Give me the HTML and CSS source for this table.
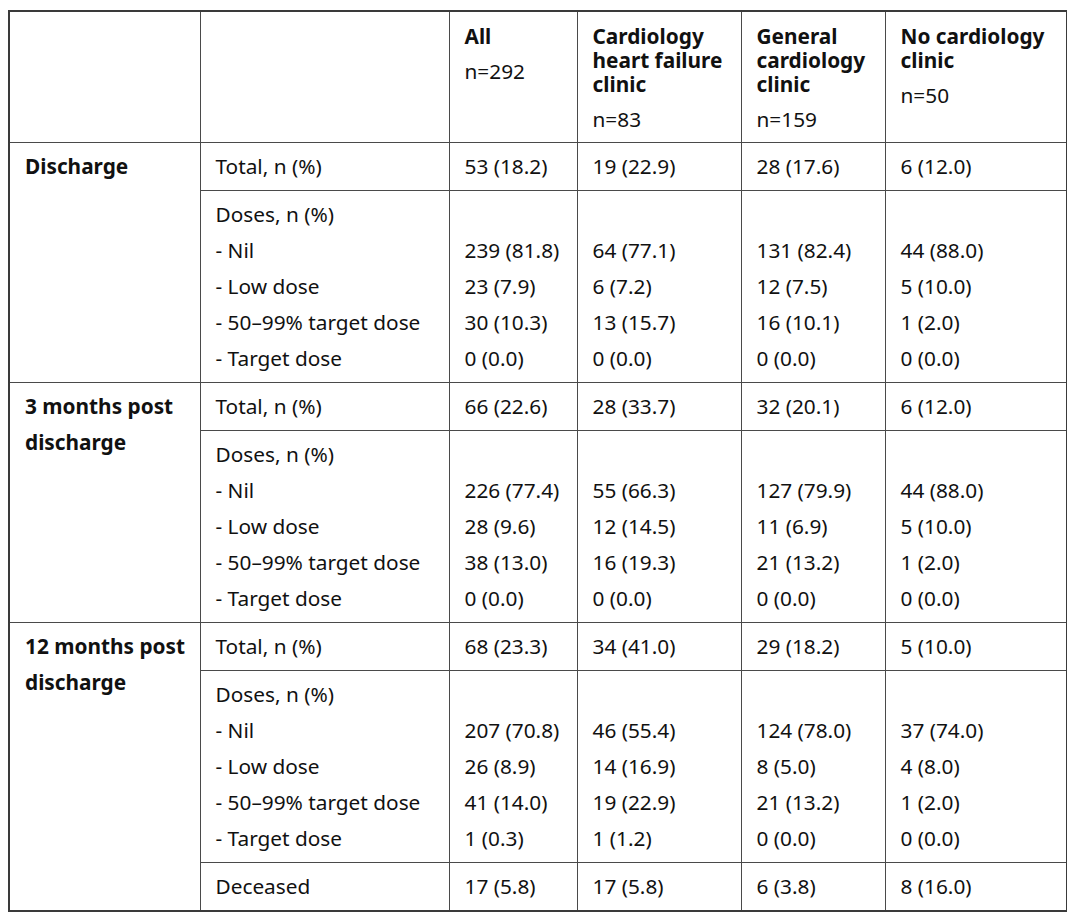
FILE: index.html
```html
<!DOCTYPE html>
<html lang="en">
<head>
<meta charset="utf-8">
<title>Table</title>
<link rel="stylesheet" href="styles.css">
</head>
<body>
<table class="data">
  <colgroup>
    <col class="c1"><col class="c2"><col class="c3"><col class="c4"><col class="c5"><col class="c6">
  </colgroup>
  <thead>
    <tr>
      <th></th>
      <th></th>
      <th><div class="hd">All</div><div class="n">n=292</div></th>
      <th><div class="hd">Cardiology heart failure clinic</div><div class="n">n=83</div></th>
      <th><div class="hd">General cardiology clinic</div><div class="n">n=159</div></th>
      <th><div class="hd">No cardiology clinic</div><div class="n">n=50</div></th>
    </tr>
  </thead>
  <tbody>
    <tr>
      <th rowspan="2" class="grp">Discharge</th>
      <td>Total, n (%)</td>
      <td>53 (18.2)</td><td>19 (22.9)</td><td>28 (17.6)</td><td>6 (12.0)</td>
    </tr>
    <tr>
      <td>Doses, n (%)<br>- Nil<br>- Low dose<br>- 50–99% target dose<br>- Target dose</td>
      <td><br>239 (81.8)<br>23 (7.9)<br>30 (10.3)<br>0 (0.0)</td>
      <td><br>64 (77.1)<br>6 (7.2)<br>13 (15.7)<br>0 (0.0)</td>
      <td><br>131 (82.4)<br>12 (7.5)<br>16 (10.1)<br>0 (0.0)</td>
      <td><br>44 (88.0)<br>5 (10.0)<br>1 (2.0)<br>0 (0.0)</td>
    </tr>
    <tr>
      <th rowspan="2" class="grp">3 months post discharge</th>
      <td>Total, n (%)</td>
      <td>66 (22.6)</td><td>28 (33.7)</td><td>32 (20.1)</td><td>6 (12.0)</td>
    </tr>
    <tr>
      <td>Doses, n (%)<br>- Nil<br>- Low dose<br>- 50–99% target dose<br>- Target dose</td>
      <td><br>226 (77.4)<br>28 (9.6)<br>38 (13.0)<br>0 (0.0)</td>
      <td><br>55 (66.3)<br>12 (14.5)<br>16 (19.3)<br>0 (0.0)</td>
      <td><br>127 (79.9)<br>11 (6.9)<br>21 (13.2)<br>0 (0.0)</td>
      <td><br>44 (88.0)<br>5 (10.0)<br>1 (2.0)<br>0 (0.0)</td>
    </tr>
    <tr>
      <th rowspan="3" class="grp">12 months post discharge</th>
      <td>Total, n (%)</td>
      <td>68 (23.3)</td><td>34 (41.0)</td><td>29 (18.2)</td><td>5 (10.0)</td>
    </tr>
    <tr>
      <td>Doses, n (%)<br>- Nil<br>- Low dose<br>- 50–99% target dose<br>- Target dose</td>
      <td><br>207 (70.8)<br>26 (8.9)<br>41 (14.0)<br>1 (0.3)</td>
      <td><br>46 (55.4)<br>14 (16.9)<br>19 (22.9)<br>1 (1.2)</td>
      <td><br>124 (78.0)<br>8 (5.0)<br>21 (13.2)<br>0 (0.0)</td>
      <td><br>37 (74.0)<br>4 (8.0)<br>1 (2.0)<br>0 (0.0)</td>
    </tr>
    <tr>
      <td>Deceased</td>
      <td>17 (5.8)</td><td>17 (5.8)</td><td>6 (3.8)</td><td>8 (16.0)</td>
    </tr>
  </tbody>
</table>
</body>
</html>
```

FILE: styles.css
```css
html, body {
  background: #ffffff;
}
body {
  margin: 10px 8px 8px 8px;
  font-family: "Noto Sans", "Open Sans", sans-serif;
  font-size: 20.8px;
  color: #111111;
}
.data {
  border-collapse: collapse;
  table-layout: fixed;
  width: 1058px;
  border: 2px solid #3a3a3a;
}
.c1 { width: 191px; }
.c2 { width: 249px; }
.c3 { width: 128px; }
.c4 { width: 164px; }
.c5 { width: 144px; }
.c6 { width: 182px; }
.data th,
.data td {
  border: 1px solid #4a4a4a;
  vertical-align: top;
  text-align: left;
  line-height: 36px;
  padding: 5px 15px 6px 15px;
  font-weight: normal;
}
.data thead th {
  padding: 12px 14px 5px 15px;
}
.data .hd {
  font-weight: bold;
  line-height: 24px;
}
.data .n {
  margin-top: 5px;
  line-height: 36px;
}
.data .grp {
  font-weight: bold;
  padding-right: 4px;
}
```
